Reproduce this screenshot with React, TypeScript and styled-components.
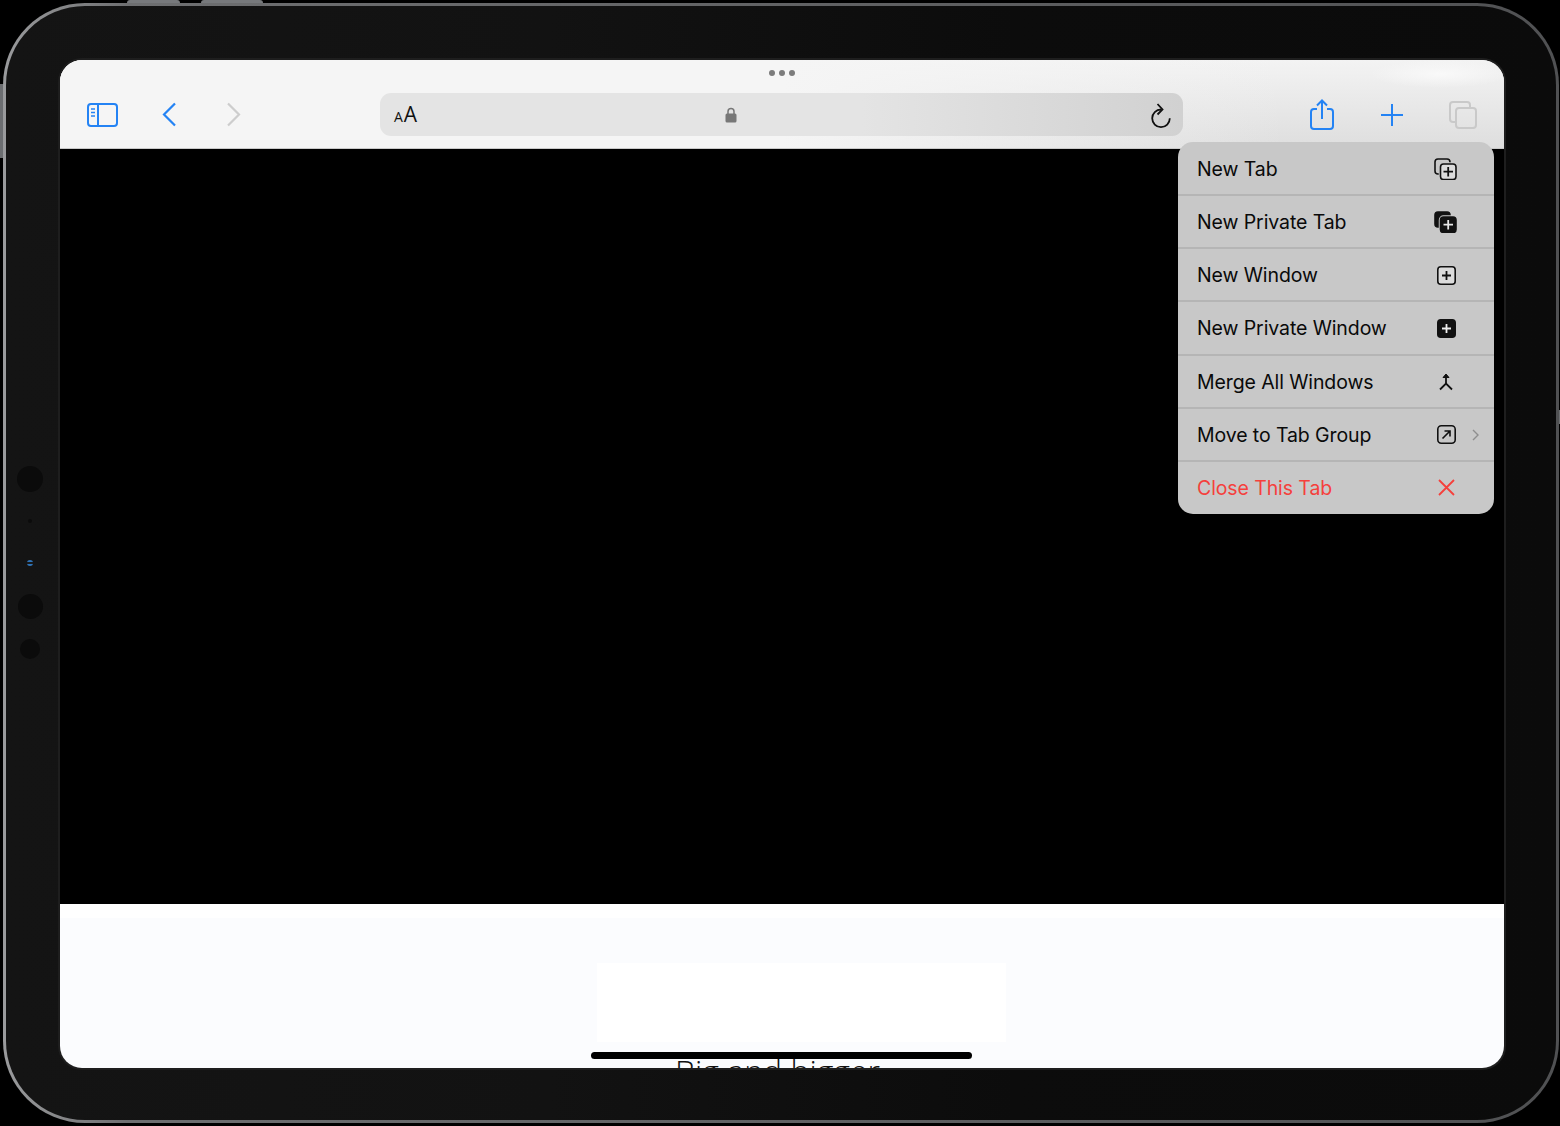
import React from 'react';
import styled, { createGlobalStyle } from 'styled-components';

const GlobalStyle = createGlobalStyle`
    html, body {
        margin: 0;
        padding: 0;
        background: #000;
        font-family: Inter, "Liberation Sans", sans-serif;
    }
`;

const Stage = styled.div`
    position: relative;
    width: 1560px;
    height: 1126px;
    padding: 3px 1px 3px 3px;
    box-sizing: border-box;
    overflow: hidden;
`;

const HardwareButton = styled.div<{ $left: number; $width: number }>`
    position: absolute;
    top: 0;
    left: ${(p) => p.$left}px;
    width: ${(p) => p.$width}px;
    height: 5px;
    border-radius: 3px 3px 0 0;
    background: #77797c;
`;

const SideButton = styled.div<{ $side: 'left' | 'right'; $top: number; $height: number }>`
    position: absolute;
    ${(p) => p.$side}: 0;
    top: ${(p) => p.$top}px;
    width: 4px;
    height: ${(p) => p.$height}px;
    background: #6c6e71;
`;

const Bezel = styled.div`
    position: relative;
    width: 100%;
    height: 100%;
    box-sizing: border-box;
    padding: 54px 52px 52px 54px;
    border: 3px solid transparent;
    border-radius: 82px;
    background:
        linear-gradient(90deg, #141414 0%, #121212 35%, #0c0c0c 65%, #0b0b0b 100%) padding-box,
        linear-gradient(90deg, #9a9b9d 0%, #6e6f71 8%, #616264 50%, #505153 100%) border-box;
`;

const SensorRail = styled.div`
    position: absolute;
    left: 11px;
    top: 460px;
    width: 26px;
    display: flex;
    flex-direction: column;
    align-items: center;
`;

const Sensor = styled.div<{ $size: number; $gap: number; $color?: string }>`
    width: ${(p) => p.$size}px;
    height: ${(p) => p.$size}px;
    margin-bottom: ${(p) => p.$gap}px;
    border-radius: 50%;
    background: ${(p) => p.$color || '#0b0b0b'};
`;

const Screen = styled.div`
    position: relative;
    width: 1444px;
    height: 1008px;
    border-radius: 22px;
    overflow: hidden;
    background: #fbfcfe;
    box-shadow: 0 0 0 2px #1e1e1e;
    display: flex;
    flex-direction: column;
`;

const Toolbar = styled.header`
    height: 89px;
    flex-shrink: 0;
    box-sizing: border-box;
    padding-top: 10px;
    border-bottom: 1px solid #c9c9c9;
    background:
        radial-gradient(ellipse 70px 14px at 1380px 14px, rgba(250, 250, 250, 0.9), transparent),
        linear-gradient(90deg, #f5f5f5 0%, #f5f5f5 50%, rgba(245, 245, 245, 0) 85%),
        linear-gradient(180deg, #f3f3f3 0%, #dedede 100%);
`;

const GrabDots = styled.div`
    display: flex;
    justify-content: center;
    gap: 4px;
    height: 7px;
`;

const GrabDot = styled.span`
    width: 6px;
    height: 6px;
    border-radius: 50%;
    background: #7c7c7c;
`;

const ToolRow = styled.div`
    display: grid;
    grid-template-columns: 320px 803px 1fr;
    height: 43px;
    margin-top: 16px;
`;

const ToolGroup = styled.div<{ $end?: boolean }>`
    display: flex;
    align-items: center;
    justify-content: ${(p) => (p.$end ? 'flex-end' : 'flex-start')};
    padding: ${(p) => (p.$end ? '0 5px 0 0' : '0 0 0 7px')};
`;

const ToolSlot = styled.button<{ $width: number }>`
    width: ${(p) => p.$width}px;
    height: 43px;
    padding: 0;
    border: 0;
    background: none;
    display: flex;
    align-items: center;
    justify-content: center;
`;

const AddressBar = styled.div`
    display: flex;
    align-items: center;
    padding: 0 12px 0 14px;
    border-radius: 11px;
    background: linear-gradient(90deg, #e4e4e4 0%, #e4e4e4 60%, #d1d1d1 100%);
`;

const AaLabel = styled.div`
    display: flex;
    align-items: baseline;
    gap: 1px;
    width: 331px;
    color: #111;
    font-family: "Open Sans", "Liberation Sans", sans-serif;
    line-height: 1;
`;

const SmallA = styled.span`
    font-size: 14px;
`;

const BigA = styled.span`
    font-size: 21px;
`;

const ReloadWrap = styled.span`
    margin-left: auto;
    display: flex;
`;

const Content = styled.main`
    height: 755px;
    flex-shrink: 0;
    background: #000;
`;

const WhiteStrip = styled.div`
    height: 14px;
    flex-shrink: 0;
    background: #fff;
`;

const PageBody = styled.section`
    flex: 1;
    padding-top: 45px;
`;

const Banner = styled.div`
    width: 409px;
    height: 79px;
    margin-left: 537px;
    background: #fff;
`;

const Headline = styled.h2`
    margin: 11px 0 0 615px;
    font-size: 32px;
    line-height: 36px;
    font-weight: 300;
    white-space: nowrap;
    color: #111;
    font-family: "Open Sans", "Liberation Sans", sans-serif;
`;

const HomeBar = styled.div`
    position: absolute;
    left: 531px;
    bottom: 9px;
    width: 381px;
    height: 7px;
    border-radius: 4px;
    background: #000;
`;

const Menu = styled.div`
    position: absolute;
    top: 82px;
    left: 1118px;
    width: 316px;
    height: 372px;
    display: grid;
    grid-auto-rows: 1fr;
    border-radius: 15px;
    overflow: hidden;
    background: #c8c8c8;
`;

const MenuRow = styled.div<{ $danger?: boolean }>`
    position: relative;
    display: flex;
    align-items: center;
    box-sizing: border-box;
    padding: 1px 0 0 19px;
    box-shadow: 0 -1px 0 #b5b5b5, inset 0 1px 0 #b5b5b5;
    color: ${(p) => (p.$danger ? '#f5403c' : '#0a0a0a')};
    font-size: 19.5px;
    letter-spacing: -0.1px;

    &:first-child {
        box-shadow: none;
    }
`;

const MenuLabel = styled.span`
    flex: 1;
`;

const MenuIcon = styled.span`
    width: 24px;
    height: 24px;
    margin-right: 36px;
    display: flex;
    align-items: center;
    justify-content: center;
`;

const MenuChevron = styled.span`
    position: absolute;
    right: 15px;
    display: flex;
`;

const BLUE = '#2483f4';
const MENU_LIGHT = '#dcdcdc';

const SidebarIcon = () => (
    <svg width="31" height="24" viewBox="0 0 31 24" fill="none" stroke={BLUE} strokeWidth="2">
        <rect x="1" y="1" width="29" height="22" rx="3" />
        <path d="M11 1v22" />
        <path d="M4 6h4M4 9.5h4M4 13h4" strokeWidth="1.5" />
    </svg>
);

const Chevron = ({ color, flip }: { color: string; flip?: boolean }) => (
    <svg width="15" height="25" viewBox="0 0 15 25" fill="none" stroke={color} strokeWidth="2.2">
        <path d={flip ? 'M2 1.5 13 12.5 2 23.5' : 'M13 1.5 2 12.5 13 23.5'} />
    </svg>
);

const LockIcon = () => (
    <svg width="12" height="16" viewBox="0 0 12 16" fill="none">
        <path d="M3 7V4.500a3 3 0 0 1 6 0V7" stroke="#777" strokeWidth="1.5" />
        <rect x="0.5" y="6.5" width="11" height="9" rx="1.5" fill="#777" />
    </svg>
);

const ReloadIcon = () => (
    <svg width="20" height="26" viewBox="0 0 20 26" fill="none" stroke="#111" strokeWidth="1.8">
        <path d="M10 7.500A8.800 8.800 0 1 0 18.800 16.300" />
        <path d="M6.500 2 11.500 7.500 6.500 12.500" />
    </svg>
);

const ShareIcon = () => (
    <svg width="24" height="31" viewBox="0 0 24 31" fill="none" stroke={BLUE} strokeWidth="2">
        <path d="M7 10H4a3 3 0 0 0-3 3v14a3 3 0 0 0 3 3h16a3 3 0 0 0 3-3V13a3 3 0 0 0-3-3h-3" />
        <path d="M12 20V2M7 6.500 12 1.500l5 5" />
    </svg>
);

const PlusIcon = () => (
    <svg width="22" height="22" viewBox="0 0 22 22" fill="none" stroke={BLUE} strokeWidth="2">
        <path d="M11 0v22M0 11h22" />
    </svg>
);

const TabsIcon = () => (
    <svg width="28" height="28" viewBox="0 0 28 28" fill="none" stroke="#c9c9c9" strokeWidth="2">
        <path d="M6.500 21H4a3 3 0 0 1-3-3V4a3 3 0 0 1 3-3h14a3 3 0 0 1 3 3v2.500" />
        <rect x="7" y="7" width="20" height="20" rx="3" />
    </svg>
);

const NewTabIcon = ({ solid }: { solid?: boolean }) => (
    <svg width="24" height="22" viewBox="0 0 24 22" fill="none" stroke="#111" strokeWidth="1.6">
        <rect x="1" y="1" width="15" height="15" rx="3" fill={solid ? '#111' : 'none'} />
        <rect x="6.500" y="6" width="15.500" height="15.500" rx="3" fill="#c8c8c8" stroke="#c8c8c8" strokeWidth="3.500" />
        <rect x="6.500" y="6" width="15.500" height="15.500" rx="3" fill={solid ? '#111' : MENU_LIGHT} />
        <path d="M14.200 9v9.500M9.500 13.700H19" stroke={solid ? '#e6e6e6' : '#111'} strokeWidth="1.8" />
    </svg>
);

const NewWindowIcon = ({ solid }: { solid?: boolean }) => (
    <svg width="19" height="19" viewBox="0 0 19 19" fill="none">
        <rect x="0.800" y="0.800" width="17.400" height="17.400" rx="3" fill={solid ? '#111' : MENU_LIGHT} stroke="#111" strokeWidth="1.6" />
        <path d="M9.500 5v9M5 9.500h9" stroke={solid ? '#eee' : '#111'} strokeWidth="1.8" />
    </svg>
);

const MergeIcon = () => (
    <svg width="14" height="18" viewBox="0 0 14 18" fill="none" stroke="#111" strokeWidth="1.8">
        <path d="M7 11V2" />
        <path d="M4 4.500 7 1l3 3.500z" fill="#111" strokeWidth="1" />
        <path d="M1 16.500 7 10.500l6 6" />
    </svg>
);

const MoveIcon = () => (
    <svg width="19" height="19" viewBox="0 0 19 19" fill="none" stroke="#111" strokeWidth="1.6">
        <rect x="0.800" y="0.800" width="17.400" height="17.400" rx="3.500" />
        <path d="M5.500 13.500 12.500 6.500M7.500 6h5.500v5.500" />
    </svg>
);

const CloseIcon = () => (
    <svg width="17" height="17" viewBox="0 0 17 17" fill="none" stroke="#f5403c" strokeWidth="1.8">
        <path d="M1 1l15 15M16 1 1 16" />
    </svg>
);

const SmallChevron = () => (
    <svg width="7" height="12" viewBox="0 0 7 12" fill="none" stroke="#8e8e8e" strokeWidth="1.4">
        <path d="M1 1l5 5-5 5" />
    </svg>
);

const menuItems = [
    { label: 'New Tab', icon: <NewTabIcon /> },
    { label: 'New Private Tab', icon: <NewTabIcon solid /> },
    { label: 'New Window', icon: <NewWindowIcon /> },
    { label: 'New Private Window', icon: <NewWindowIcon solid /> },
    { label: 'Merge All Windows', icon: <MergeIcon /> },
    { label: 'Move to Tab Group', icon: <MoveIcon />, more: true },
    { label: 'Close This Tab', icon: <CloseIcon />, danger: true },
];

const App: React.FC = () => {
    return (
        <Stage>
            <GlobalStyle />
            <HardwareButton $left={127} $width={53} />
            <HardwareButton $left={201} $width={62} />
            <SideButton $side="left" $top={84} $height={74} />
            <SideButton $side="right" $top={410} $height={14} />
            <Bezel>
                <SensorRail>
                    <Sensor $size={26} $gap={27} />
                    <Sensor $size={4} $gap={37} />
                    <Sensor $size={6} $gap={27.5} $color="linear-gradient(180deg, #2f74b8 0 30%, #1a1a1a 30% 70%, #2f74b8 70%)" />
                    <Sensor $size={25} $gap={20.5} />
                    <Sensor $size={20} $gap={0} />
                </SensorRail>
                <Screen>
                    <Toolbar>
                        <GrabDots>
                            <GrabDot />
                            <GrabDot />
                            <GrabDot />
                        </GrabDots>
                        <ToolRow>
                            <ToolGroup>
                                <ToolSlot $width={70.5}><SidebarIcon /></ToolSlot>
                                <ToolSlot $width={64}><Chevron color={BLUE} /></ToolSlot>
                                <ToolSlot $width={64}><Chevron color="#cdcdcd" flip /></ToolSlot>
                            </ToolGroup>
                            <AddressBar>
                                <AaLabel>
                                    <SmallA>A</SmallA>
                                    <BigA>A</BigA>
                                </AaLabel>
                                <LockIcon />
                                <ReloadWrap>
                                    <ReloadIcon />
                                </ReloadWrap>
                            </AddressBar>
                            <ToolGroup $end>
                                <ToolSlot $width={73}><ShareIcon /></ToolSlot>
                                <ToolSlot $width={68}><PlusIcon /></ToolSlot>
                                <ToolSlot $width={73}><TabsIcon /></ToolSlot>
                            </ToolGroup>
                        </ToolRow>
                    </Toolbar>
                    <Content />
                    <WhiteStrip />
                    <PageBody>
                        <Banner />
                        <Headline>Big and bigger</Headline>
                    </PageBody>
                    <HomeBar />
                    <Menu>
                        {menuItems.map((item) => (
                            <MenuRow key={item.label} $danger={item.danger}>
                                <MenuLabel>{item.label}</MenuLabel>
                                <MenuIcon>{item.icon}</MenuIcon>
                                {item.more && (
                                    <MenuChevron>
                                        <SmallChevron />
                                    </MenuChevron>
                                )}
                            </MenuRow>
                        ))}
                    </Menu>
                </Screen>
            </Bezel>
        </Stage>
    );
};

export default App;
